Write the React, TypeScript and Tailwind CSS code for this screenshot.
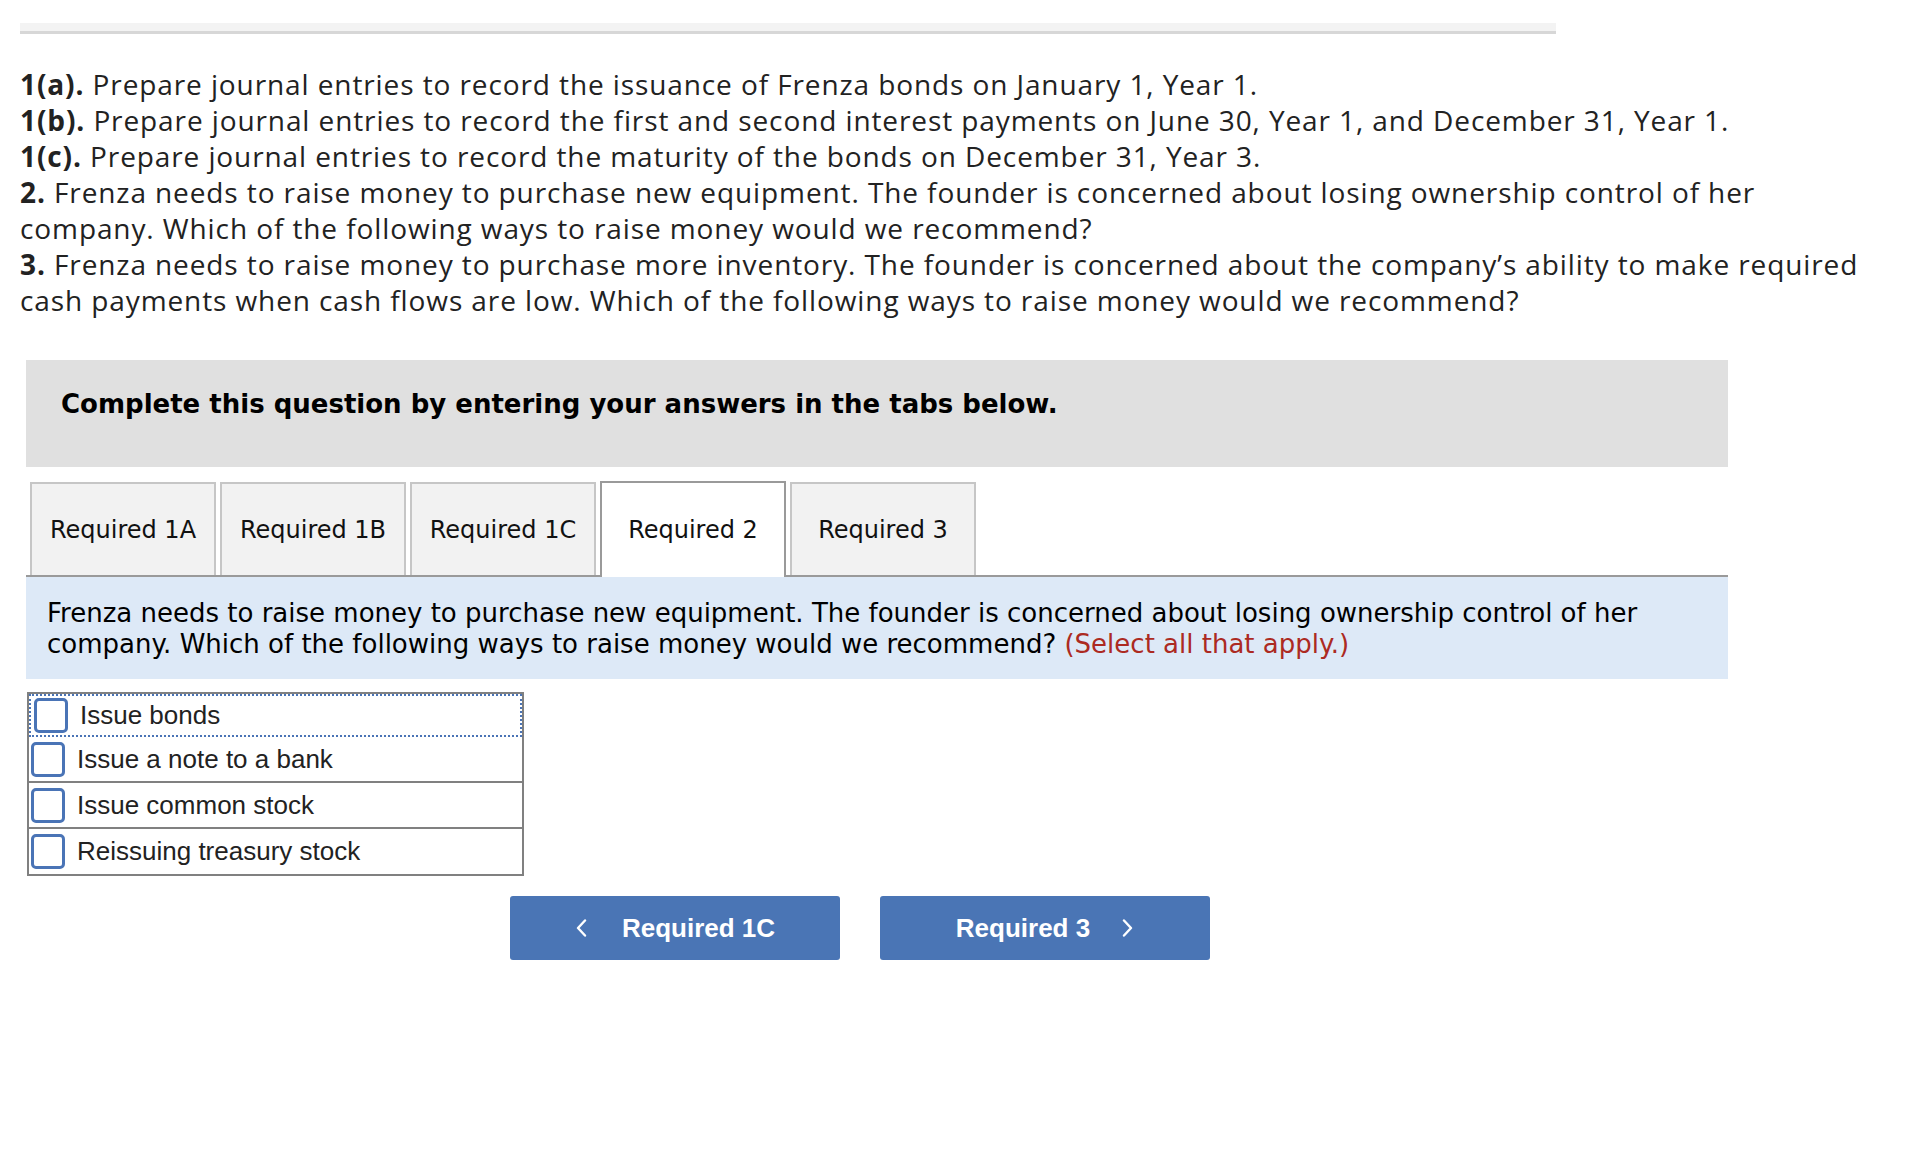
import { useState } from "react";

const tabs = ["Required 1A", "Required 1B", "Required 1C", "Required 2", "Required 3"];

const options = [
    "Issue bonds",
    "Issue a note to a bank",
    "Issue common stock",
    "Reissuing treasury stock",
];

function Chevron({ dir }: { dir: "left" | "right" }) {
    return (
        <svg width="13" height="18" viewBox="0 0 13 18" fill="none">
            <polyline
                points={dir === "left" ? "10,1.5 3,9 10,16.5" : "3,1.5 10,9 3,16.5"}
                stroke="white"
                strokeWidth="2.4"
                strokeLinecap="round"
                strokeLinejoin="round"
            />
        </svg>
    );
}

export default function App() {
    const [active, setActive] = useState(3);
    const [checked, setChecked] = useState<boolean[]>([false, false, false, false]);

    return (
        <div className="min-h-screen bg-white px-[20px] pt-[23px]">
            {/* top progress bar */}
            <div className="w-[1536px] h-[11px] bg-[#f3f3f3] border-b-[3px] border-[#d7d7d7]" />

            {/* question intro */}
            <div className="mt-[32px] text-[28px] leading-[36px] tracking-[0.9px] text-[#222] font-['Open_Sans',Arial,sans-serif]">
                <b>1(a).</b> Prepare journal entries to record the issuance of Frenza bonds on January 1, Year 1.
                <br />
                <b>1(b).</b> Prepare journal entries to record the first and second interest payments on June 30, Year 1, and December 31, Year 1.
                <br />
                <b>1(c).</b> Prepare journal entries to record the maturity of the bonds on December 31, Year 3.
                <br />
                <b>2.</b> Frenza needs to raise money to purchase new equipment. The founder is concerned about losing ownership control of her
                <br />
                company. Which of the following ways to raise money would we recommend?
                <br />
                <b>3.</b> Frenza needs to raise money to purchase more inventory. The founder is concerned about the company’s ability to make required
                <br />
                cash payments when cash flows are low. Which of the following ways to raise money would we recommend?
            </div>

            <div className="ml-[6px] w-[1702px] mt-[42px] font-['DejaVu_Sans',Verdana,sans-serif]">
                {/* instruction box */}
                <div className="h-[107px] bg-[#e0e0e0] pl-[35px] pt-[29px]">
                    <p className="text-[26px] leading-[30px] font-bold text-black">
                        Complete this question by entering your answers in the tabs below.
                    </p>
                </div>

                {/* tabs */}
                <div className="mt-[14px] flex items-end gap-[4px] pl-[4px] border-b-2 border-[#9a9a9a]">
                    {tabs.map((t, i) =>
                        i === active ? (
                            <button
                                key={t}
                                onClick={() => setActive(i)}
                                className="relative -mb-[2px] w-[186px] h-[96px] bg-white border-2 border-b-0 border-[#9a9a9a] text-[24px] text-[#111] flex items-center justify-center"
                            >
                                {t}
                            </button>
                        ) : (
                            <button
                                key={t}
                                onClick={() => setActive(i)}
                                className="w-[186px] h-[93px] bg-[#f2f2f2] border-2 border-b-0 border-[#c6c6c6] text-[24px] text-[#111] flex items-center justify-center"
                            >
                                {t}
                            </button>
                        )
                    )}
                </div>

                {/* question panel */}
                <div className="bg-[#dde9f7] pl-[21px] pt-[21px] pb-[19px] text-[26px] leading-[31px] text-black">
                    Frenza needs to raise money to purchase new equipment. The founder is concerned about losing ownership control of her
                    <br />
                    company. Which of the following ways to raise money would we recommend?{" "}
                    <span className="text-[#ac2a22]">(Select all that apply.)</span>
                </div>

                {/* answer choices */}
                <div className="mt-[13px] ml-[1px] w-[497px] border-2 border-[#808080] font-['Liberation_Sans',Arial,sans-serif] text-[26px] text-[#222]">
                    {options.map((o, i) => (
                        <label
                            key={o}
                            className={
                                i === 0
                                    ? "flex items-center h-[43px] pl-[3px] gap-[12px] border-2 border-dotted border-[#4a74b6] cursor-pointer"
                                    : i === 3
                                    ? "flex items-center h-[45px] pl-[2px] gap-[12px] cursor-pointer"
                                    : "flex items-center h-[46px] pl-[2px] gap-[12px] border-b-2 border-[#808080] cursor-pointer"
                            }
                        >
                            <span
                                onClick={() => setChecked(checked.map((c, j) => (j === i ? !c : c)))}
                                className="w-[34px] h-[35px] shrink-0 rounded-[5px] border-[3px] border-[#4a74b6] bg-white flex items-center justify-center text-[#4a74b6] text-[22px]"
                            >
                                {checked[i] ? "✓" : ""}
                            </span>
                            <span>{o}</span>
                        </label>
                    ))}
                </div>

                {/* navigation */}
                <div className="mt-[20px] ml-[484px] flex gap-[40px] font-['Liberation_Sans',Arial,sans-serif]">
                    <button
                        onClick={() => setActive(2)}
                        className="w-[330px] h-[64px] rounded-[3px] bg-[#4a75b5] text-white text-[26px] font-bold flex items-center justify-center gap-[34px]"
                    >
                        <Chevron dir="left" />
                        Required 1C
                    </button>
                    <button
                        onClick={() => setActive(4)}
                        className="w-[330px] h-[64px] rounded-[3px] bg-[#4a75b5] text-white text-[26px] font-bold flex items-center justify-center gap-[31px]"
                    >
                        Required 3
                        <Chevron dir="right" />
                    </button>
                </div>
            </div>
        </div>
    );
}
